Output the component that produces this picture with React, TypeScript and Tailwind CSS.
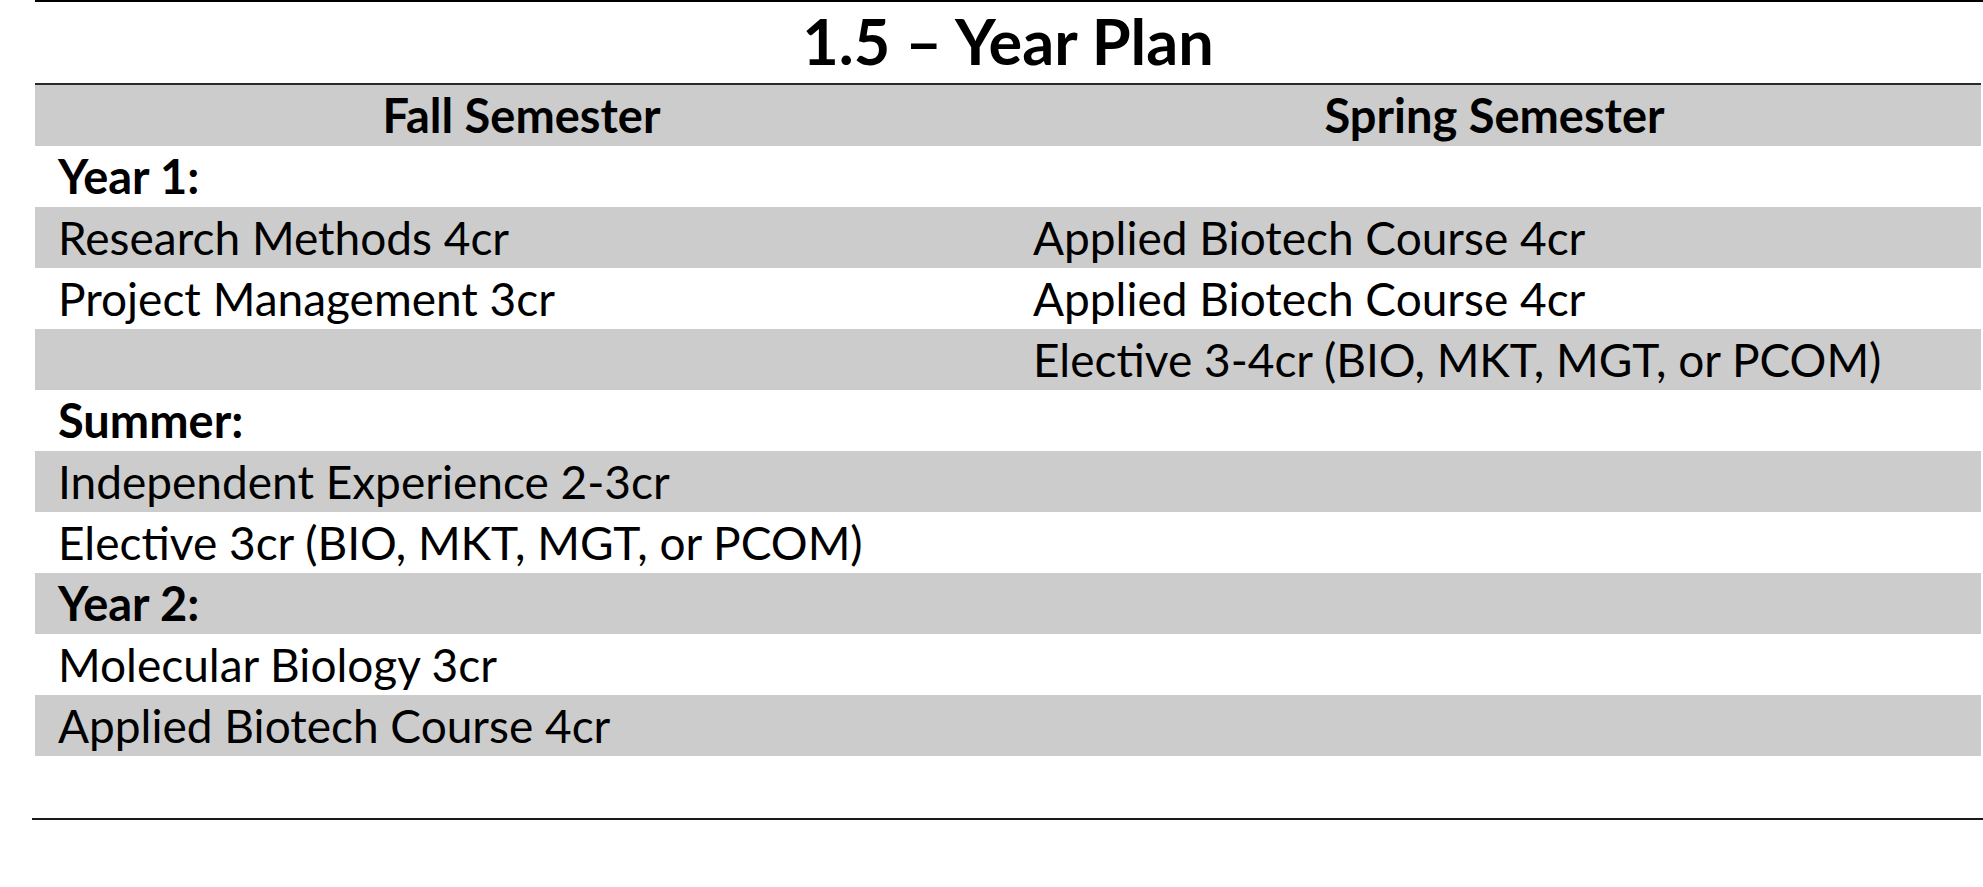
const rows: { fall: string; spring: string; bold?: boolean; gray: boolean }[] = [
  { fall: "Year 1:", spring: "", bold: true, gray: false },
  { fall: "Research Methods 4cr", spring: "Applied Biotech Course 4cr", gray: true },
  { fall: "Project Management 3cr", spring: "Applied Biotech Course 4cr", gray: false },
  { fall: "", spring: "Elective 3-4cr (BIO, MKT, MGT, or PCOM)", gray: true },
  { fall: "Summer:", spring: "", bold: true, gray: false },
  { fall: "Independent Experience 2-3cr", spring: "", gray: true },
  { fall: "Elective 3cr (BIO, MKT, MGT, or PCOM)", spring: "", gray: false },
  { fall: "Year 2:", spring: "", bold: true, gray: true },
  { fall: "Molecular Biology 3cr", spring: "", gray: false },
  { fall: "Applied Biotech Course 4cr", spring: "", gray: true },
];

export default function App() {
  return (
    <div className="h-[887px] w-full overflow-hidden bg-white font-['Lato',sans-serif] leading-none text-black">
      <div className="ml-[35px] border-t-2 border-black" />
      <div className="ml-[35px] w-[1946px]">
        <h1 className="flex h-[81px] items-center justify-center pb-[4px] text-[63px] font-bold leading-none">
          1.5 – Year Plan
        </h1>
        <div className="border-t-2 border-[#2a2a2a]" />
        <div className="grid h-[61px] grid-cols-2 items-center bg-[#cccccc] text-[47px] font-bold">
          <div className="text-center">Fall Semester</div>
          <div className="text-center">Spring Semester</div>
        </div>
        {rows.map((r, i) => (
          <div
            key={i}
            className={`grid h-[61px] grid-cols-2 items-center text-[46px] ${r.gray ? "bg-[#cccccc]" : "bg-white"}`}
          >
            <div className={`pl-[23px] ${r.bold ? "text-[47px] font-bold" : ""}`}>{r.fall}</div>
            <div className="pl-[25px]">{r.spring}</div>
          </div>
        ))}
        <div className="h-[62px]" />
      </div>
      <div className="ml-[32px] border-t-2 border-[#1a1a1a]" />
    </div>
  );
}
